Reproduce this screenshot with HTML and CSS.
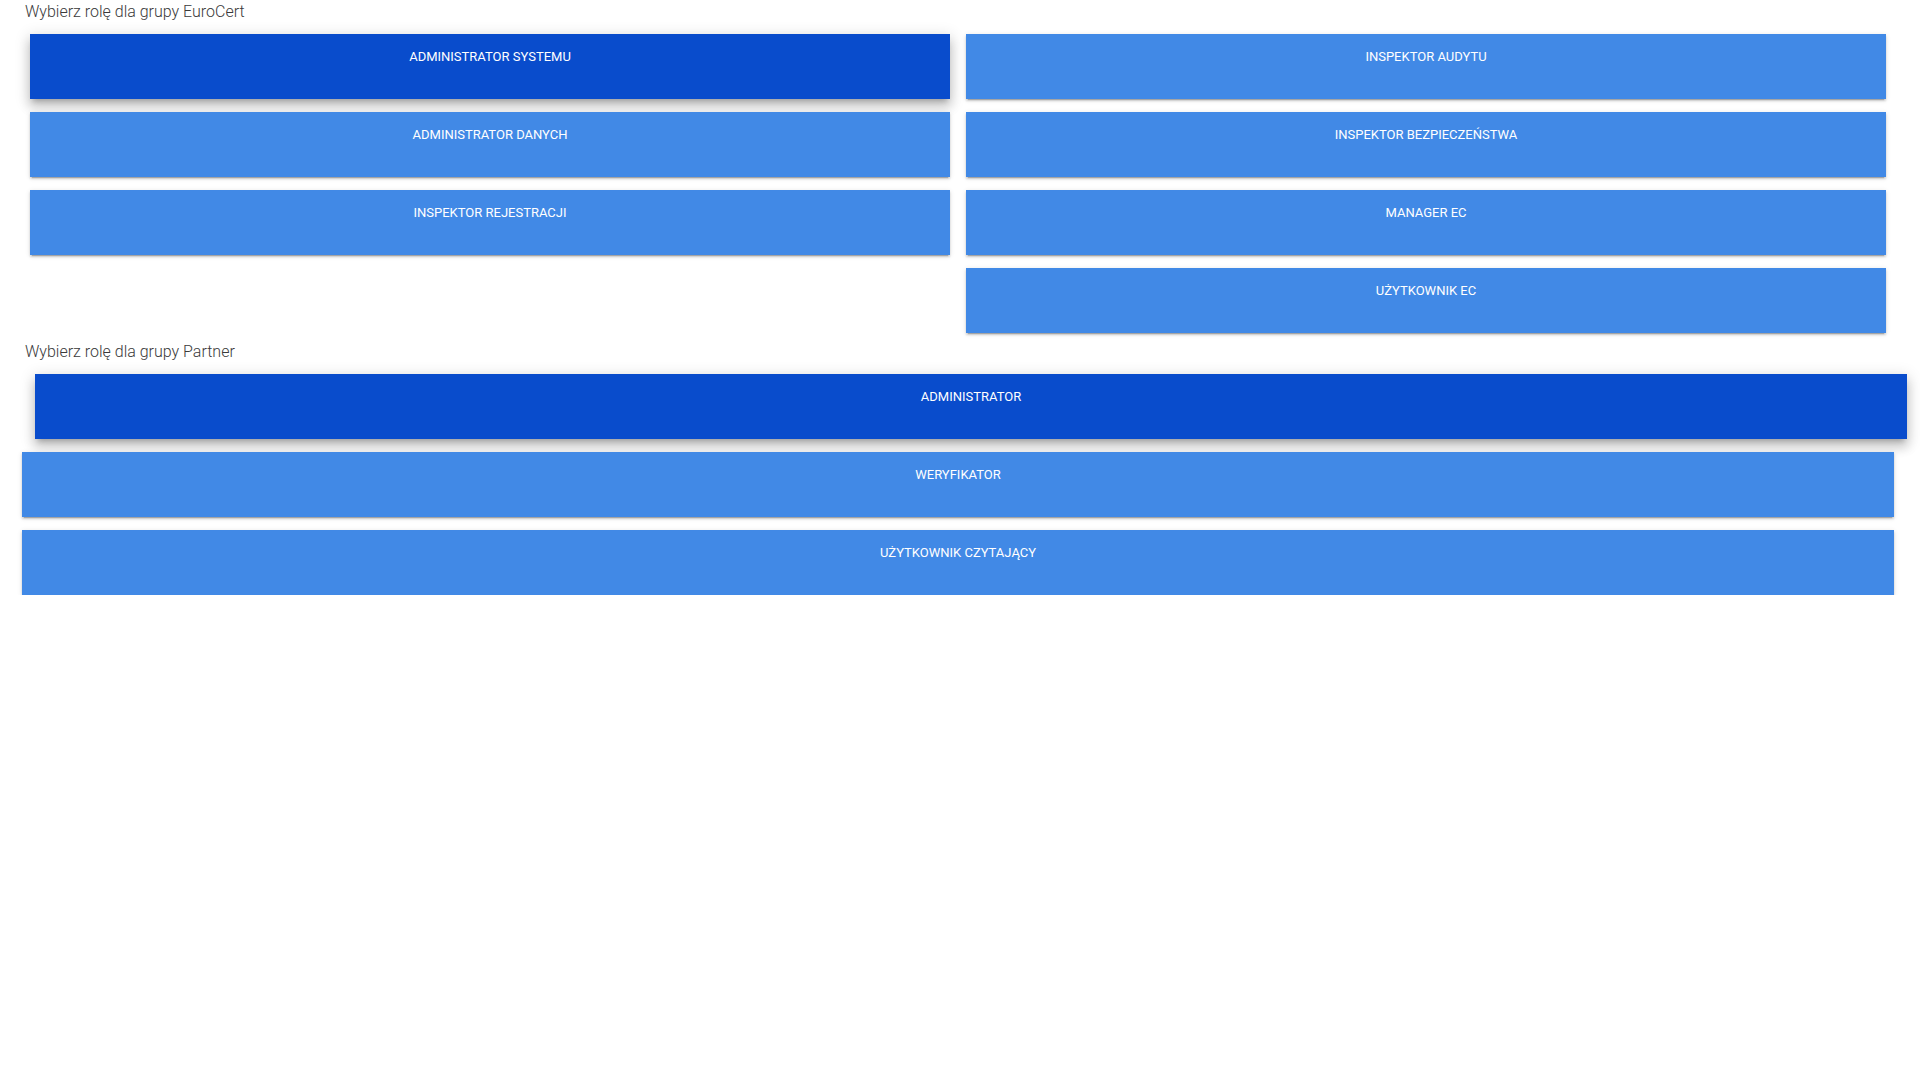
FILE: index.html
```html
<!DOCTYPE html>
<html lang="pl">
<head>
<meta charset="utf-8">
<title>Wybór roli</title>
<link rel="stylesheet" href="styles.css">
</head>
<body>
<section class="group">
  <h2 class="group-title">Wybierz rolę dla grupy EuroCert</h2>
  <div class="role-columns">
    <div class="role-col">
      <button class="role selected">Administrator systemu</button>
      <button class="role">Administrator danych</button>
      <button class="role">Inspektor rejestracji</button>
    </div>
    <div class="role-col">
      <button class="role">Inspektor audytu</button>
      <button class="role">Inspektor bezpieczeństwa</button>
      <button class="role">Manager EC</button>
      <button class="role">Użytkownik EC</button>
    </div>
  </div>
</section>
<section class="group">
  <h2 class="group-title second">Wybierz rolę dla grupy Partner</h2>
  <div class="role-list">
    <button class="role selected shifted">Administrator</button>
    <button class="role">Weryfikator</button>
    <button class="role">Użytkownik czytający</button>
  </div>
</section>
</body>
</html>
```

FILE: styles.css
```css
html, body {
  margin: 0;
  padding: 0;
  background: #ffffff;
  font-family: Roboto, "Liberation Sans", sans-serif;
}

.group-title {
  margin: 2px 0 0 0;
  padding-left: 25px;
  font-size: 16px;
  line-height: 20px;
  font-weight: 300;
  color: #3a3a3a;
}

.group-title.second {
  margin-top: 9px;
}

.role-columns {
  display: grid;
  grid-template-columns: 1fr 1fr;
  column-gap: 16px;
  padding: 12px 34px 0 30px;
}

.role-col {
  display: flex;
  flex-direction: column;
  gap: 13px;
}

.role-list {
  display: flex;
  flex-direction: column;
  gap: 13px;
  padding: 12px 26px 0 22px;
}

.role {
  display: flex;
  justify-content: center;
  align-items: flex-start;
  width: 100%;
  height: 65px;
  margin: 0;
  padding: 11px 8px 0 8px;
  border: 0;
  border-radius: 0;
  background: #4189e6;
  color: #ffffff;
  font-family: Roboto, "Liberation Sans", sans-serif;
  font-size: 13px;
  font-weight: 400;
  line-height: 24px;
  text-transform: uppercase;
  text-align: center;
  box-sizing: border-box;
  cursor: pointer;
  box-shadow: 0 3px 1px -2px rgba(0,0,0,.2), 0 2px 2px 0 rgba(0,0,0,.14), 0 1px 5px 0 rgba(0,0,0,.12);
}

.role.selected {
  background: #094ccc;
  box-shadow: 0 5px 5px -3px rgba(0,0,0,.2), 0 8px 10px 1px rgba(0,0,0,.14), 0 3px 14px 2px rgba(0,0,0,.12);
}

.role.shifted {
  margin-left: 13px;
  margin-right: -13px;
  width: auto;
}
```
